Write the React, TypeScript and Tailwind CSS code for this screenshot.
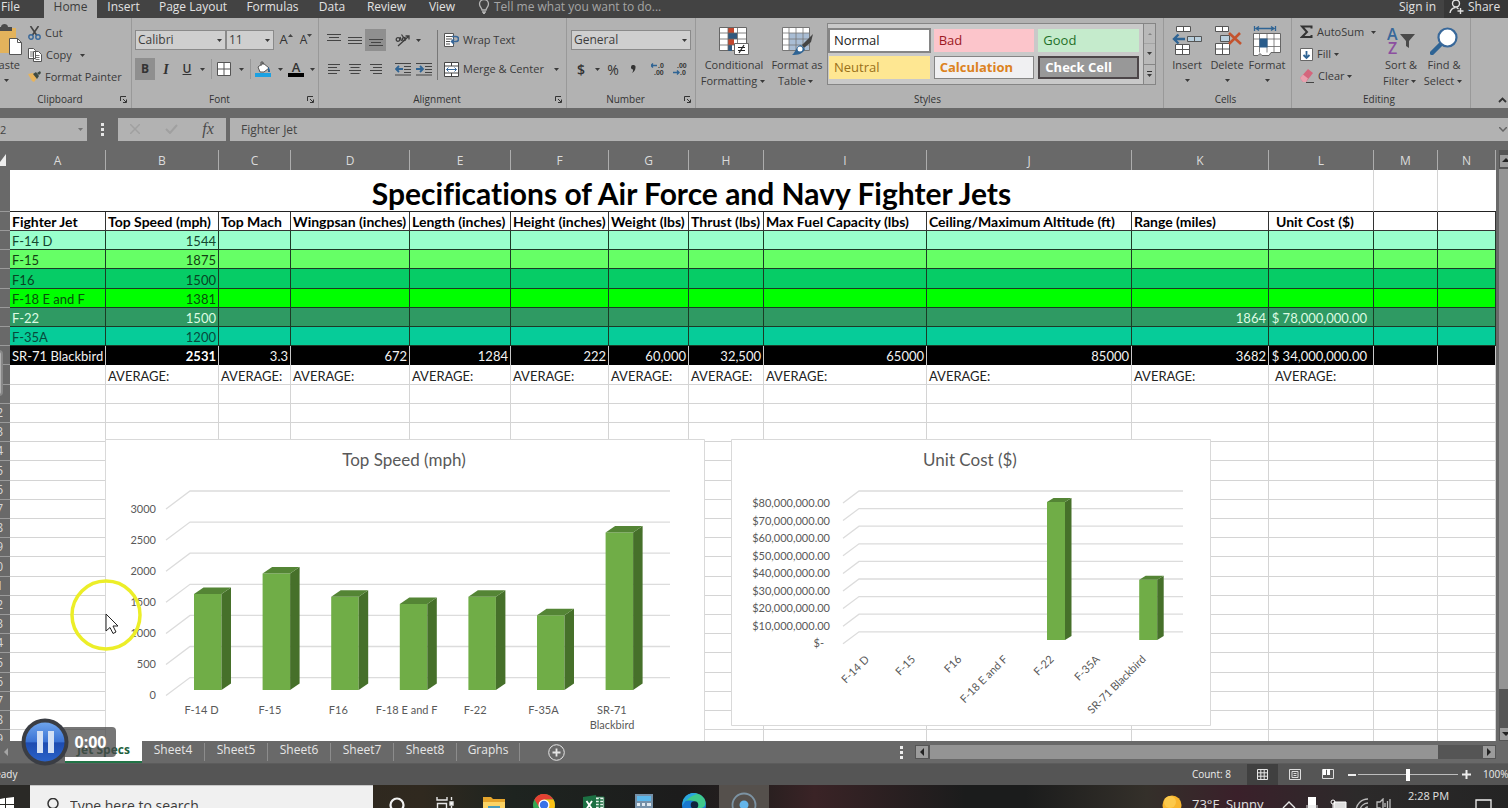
import type { ReactNode } from "react";
import clsx from "clsx";

const uiFont = "font-['Open_Sans','Noto_Sans',sans-serif]";
const cellFont = "font-['Lato','Open_Sans',sans-serif]";

const menuTabs = [
  { label: "File", width: "w-[44px] pl-px" },
  { label: "Home", width: "w-[53px] justify-center", active: true },
  { label: "Insert", width: "w-[53px] justify-center" },
  { label: "Page Layout", width: "w-[86px] justify-center" },
  { label: "Formulas", width: "w-[73px] justify-center" },
  { label: "Data", width: "w-[46px] justify-center" },
  { label: "Review", width: "w-[63px] justify-center" },
  { label: "View", width: "w-[48px] justify-center" },
];

const columns = [
  { id: "A", width: "w-[96px]" },
  { id: "B", width: "w-[113px]" },
  { id: "C", width: "w-[72px]" },
  { id: "D", width: "w-[119px]" },
  { id: "E", width: "w-[101px]" },
  { id: "F", width: "w-[98px]" },
  { id: "G", width: "w-[80px]" },
  { id: "H", width: "w-[75px]" },
  { id: "I", width: "w-[163px]" },
  { id: "J", width: "w-[205px]" },
  { id: "K", width: "w-[137px]" },
  { id: "L", width: "w-[105px]" },
  { id: "M", width: "w-[64px]" },
  { id: "N", width: "" },
];

const headings = [
  "Fighter Jet",
  "Top Speed (mph)",
  "Top Mach",
  "Wingpsan (inches)",
  "Length (inches)",
  "Height (inches)",
  "Weight (lbs)",
  "Thrust (lbs)",
  "Max Fuel Capacity (lbs)",
  "Ceiling/Maximum Altitude (ft)",
  "Range (miles)",
  "Unit Cost ($)",
  "",
  "",
];

const jets = [
  { name: "F-14 D", speed: 1544, style: "bg-[#99ffcc] text-[#14462f]" },
  { name: "F-15", speed: 1875, style: "bg-[#66ff66] text-[#123f12]" },
  { name: "F16", speed: 1500, style: "bg-[#06cc66] text-[#064523]" },
  { name: "F-18 E and F", speed: 1381, style: "bg-[#00ff00] text-[#07500b]" },
  { name: "F-22", speed: 1500, style: "bg-[#2f9a63] text-[#defbe2]", range: "1864", cost: "$ 78,000,000.00" },
  { name: "F-35A", speed: 1200, style: "bg-[#06cc99] text-[#064a3c]" },
];

const blackbird = ["SR-71 Blackbird", "2531", "3.3", "672", "1284", "222", "60,000", "32,500", "65000", "85000", "3682", "$ 34,000,000.00", "", ""];

const blankRows = Array.from({ length: 20 }, (_, i) => i + 11);

const speeds = [
  { label: "F-14 D", value: 1544 },
  { label: "F-15", value: 1875 },
  { label: "F16", value: 1500 },
  { label: "F-18 E and F", value: 1381 },
  { label: "F-22", value: 1500 },
  { label: "F-35A", value: 1200 },
  { label: "SR-71", value: 2531 },
];

const costs = [
  { label: "F-14 D", value: 0 },
  { label: "F-15", value: 0 },
  { label: "F16", value: 0 },
  { label: "F-18 E and F", value: 0 },
  { label: "F-22", value: 78 },
  { label: "F-35A", value: 0 },
  { label: "SR-71 Blackbird", value: 34 },
];

const sheets = ["Sheet4", "Sheet5", "Sheet6", "Sheet7", "Sheet8", "Graphs"];

/* ---------- small pieces ---------- */

function Caret({ className = "w-[10px]" }: { className?: string }) {
  return (
    <span className={clsx("inline-flex shrink-0 justify-center", className)}>
      <svg width="5" height="3" viewBox="0 0 5 3"><path d="M0 0h5L2.5 3z" fill="#3a3a3a" /></svg>
    </span>
  );
}

function Divider() {
  return <span className="h-5 w-px shrink-0 bg-[#989898]" />;
}

function Group({ label, width, launcher, children }: { label: string; width: string; launcher?: boolean; children: ReactNode }) {
  return (
    <section className={clsx("flex shrink-0 flex-col border-r border-[#999]", width)}>
      <div className="min-h-0 flex-1">{children}</div>
      <div className="flex h-[17px] items-center justify-center pr-1 text-[10px] text-[#333]">
        <span className="flex-1 text-center">{label}</span>
        {launcher && (
          <button aria-label={label + " settings"}>
            <svg width="7" height="7" viewBox="0 0 7 7" fill="none" stroke="#333">
              <path d="M.5 5V.5H6M3 3l3 3M6.5 3.500v3H3" />
            </svg>
          </button>
        )}
      </div>
    </section>
  );
}

function IconButton({ label, width = "w-[22px]", active, children }: { label: string; width?: string; active?: boolean; children: ReactNode }) {
  return (
    <button aria-label={label} className={clsx("flex h-[22px] shrink-0 items-center justify-center", width, active && "bg-[#8f8f8f]")}>
      {children}
    </button>
  );
}

function Combo({ label, value, width }: { label: string; value: string; width: string }) {
  return (
    <label className={clsx("relative flex h-5 shrink-0 items-center", width)}>
      <select aria-label={label} className="h-full w-full appearance-none border border-[#8a8a8a] bg-[#cfcfcf] pl-[2px] text-[12px] leading-none text-[#3d3d3d]">
        <option>{value}</option>
      </select>
      <Caret className="absolute right-1" />
    </label>
  );
}

function BigButton({ lines, width, caretBelow, icon }: { lines: string[]; width: string; caretBelow?: boolean; icon: ReactNode }) {
  return (
    <button className={clsx("flex shrink-0 flex-col items-center pt-[6px] text-[11px] leading-4 whitespace-nowrap text-[#3a3a3a]", width)}>
      <span className="flex h-[33px] items-center">{icon}</span>
      <span>{lines[0]}</span>
      {caretBelow ? (
        <Caret className="mt-[6px]" />
      ) : (
        <span className="flex items-center">{lines[1]}<Caret /></span>
      )}
    </button>
  );
}

function Lines({ rows, y = 1 }: { rows: number[]; y?: number }) {
  return (
    <svg width="14" height="14" viewBox="0 0 14 14" stroke="#444" strokeWidth="1">
      {rows.map((w, i) => (
        <path key={i} d={`M${(14 - w) / 2} ${y + i * 3 + 0.5}h${w}`} />
      ))}
    </svg>
  );
}

function TextLines({ align }: { align: "left" | "center" | "right" }) {
  return (
    <svg width="14" height="12" viewBox="0 0 14 12" stroke="#444">
      {[12, 9, 12, 9].map((w, i) => {
        const x = align === "left" ? 1 : align === "right" ? 13 - w : (14 - w) / 2;
        return <path key={i} d={`M${x} ${i * 3 + 1.5}h${w}`} />;
      })}
    </svg>
  );
}

function Indent({ flip }: { flip?: boolean }) {
  return (
    <svg width="16" height="14" viewBox="0 0 16 14" fill="none">
      <path d="M0 1.500h16M9 4.500h7M9 7.500h7M9 10.500h7M0 13h16" stroke="#444" />
      <path d={flip ? "M0 7h7M4 4l3 3-3 3" : "M1 7h7M4 4L1 7l3 3"} stroke="#2f6494" strokeWidth="1.8" />
    </svg>
  );
}

function Decimals({ less }: { less?: boolean }) {
  return (
    <svg width="14" height="14" viewBox="0 0 14 14" fontSize="7" fontWeight="600" fill="#333" fontFamily="Liberation Sans">
      <text x={less ? 4 : 7} y="6">{less ? ".00" : ".0"}</text>
      <text x={less ? 7 : 3} y="13">{less ? ".0" : ".00"}</text>
      <path d={less ? "M0 10.500h6M4 8.500l2 2-2 2" : "M0 3.500h6M2 1.500l-2 2 2 2"} stroke="#2f6494" strokeWidth="1.4" fill="none" />
    </svg>
  );
}

/* ---------- ribbon ---------- */

function MenuBar() {
  return (
    <nav className="flex h-[18px] shrink-0 overflow-hidden bg-[#434343] text-[12px] leading-[13px] text-[#e2e2e2]">
      {menuTabs.map((tab) => (
        <a key={tab.label} href="#" className={clsx("flex shrink-0", tab.width, tab.active && "bg-[#b2b2b2] text-[#3c3c3c]")}>
          {tab.label}
        </a>
      ))}
      <a href="#" className="ml-3 flex gap-1 text-[#a5a5a5]">
        <svg width="12" height="14" viewBox="0 0 12 14" fill="none" stroke="#b5b5b5" strokeWidth="1.300">
          <path d="M4 10C4 8 1.500 7 1.500 4a4.500 4.500 0 0 1 9 0C10.500 7 8 8 8 10zM4 12h4M5 13.500h2" />
        </svg>
        Tell me what you want to do...
      </a>
      <div className="ml-auto flex">
        <a href="#" className="px-2">Sign in</a>
        <a href="#" className="flex w-[64px] gap-1 bg-[#373737] pl-[5px]">
          <svg width="15" height="14" viewBox="0 0 15 14" fill="none" stroke="#e2e2e2" strokeWidth="1.400">
            <circle cx="7" cy="3.500" r="3.500" />
            <path d="M1 13c.5-3.500 2.500-5 5.500-5.500M7.500 7.500l2 1.500M11.500 8v6M8.500 11h6" />
          </svg>
          Share
        </a>
      </div>
    </nav>
  );
}

function ClipboardGroup() {
  const row = "flex h-[22px] items-center gap-1";
  return (
    <Group label="Clipboard" width="w-[132px]" launcher>
      <div className="flex pl-1 text-[11px] text-[#3a3a3a]">
        <button className="-ml-5 flex w-11 shrink-0 flex-col items-center pt-[6px] leading-4">
          <svg width="32" height="33" viewBox="0 0 32 33">
            <path d="M2 4h24v25H2z" fill="#e3b35c" />
            <path d="M7 7V3h4c0-4 7-4 7 0h4v4z" fill="#4b4b4b" />
            <path d="M19.500 14.500h8l4 4v12h-12z" fill="#fff" stroke="#555" />
            <path d="M27.500 14.500v4h4" fill="none" stroke="#555" />
          </svg>
          Paste
          <Caret className="mt-[6px]" />
        </button>
        <div className="flex flex-col pt-1 whitespace-nowrap">
          <button className={row}>
            <svg width="13" height="14" viewBox="0 0 13 14" fill="none">
              <path d="M2.500 0l6 9M10.500 0l-6 9" stroke="#444" strokeWidth="1.600" />
              <circle cx="3" cy="11" r="2.200" stroke="#38689a" strokeWidth="1.400" />
              <circle cx="10" cy="11" r="2.200" stroke="#38689a" strokeWidth="1.400" />
            </svg>
            Cut
          </button>
          <button className={row}>
            <svg width="14" height="14" viewBox="0 0 14 14" fill="#fff" stroke="#555">
              <path d="M.5.5h5l2 2v8h-7zM5.500 3.500h5l3 3v7h-8z" />
              <path d="M2 4h3M2 6h3M2 8h3M7.500 7.500h4M7.500 9.500h4M7.500 11.500h4" strokeWidth=".8" />
            </svg>
            Copy
            <Caret className="ml-[2px] w-[10px]" />
          </button>
          <button className={row}>
            <svg width="13" height="12" viewBox="0 0 13 12">
              <path d="M0 3l5-1 4 5-3 4-2-1z" fill="#e8b45c" />
              <path d="M5 3l3-2 3 4-2 3zM9 2l3-2 1 2-2 2z" fill="#3f4b42" />
            </svg>
            Format Painter
          </button>
        </div>
      </div>
    </Group>
  );
}

function FontGroup() {
  return (
    <Group label="Font" width="w-[187px]" launcher>
      <div className="flex flex-col gap-2 pt-3 pl-[3px] text-[#333]">
        <div className="flex items-center">
          <Combo label="Font name" value="Calibri" width="w-[91px]" />
          <Combo label="Font size" value="11" width="w-12" />
          <div className="ml-[2px] flex h-5">
            <button aria-label="Increase font size" className="flex w-5 items-center justify-center text-[13px]">
              A<svg width="5" height="12" viewBox="0 0 5 12"><path d="M0 3h5L2.500 0z" fill="#444" /></svg>
            </button>
            <button aria-label="Decrease font size" className="flex w-5 items-center justify-center text-[12px]">
              A<svg width="5" height="12" viewBox="0 0 5 12"><path d="M0 0h5L2.500 3z" fill="#444" /></svg>
            </button>
          </div>
        </div>
        <div className="flex items-center">
          <IconButton label="Bold" width="w-5" active><b className="text-[12px]">B</b></IconButton>
          <IconButton label="Italic"><i className="font-['Liberation_Serif',serif] text-[14px] font-bold">I</i></IconButton>
          <IconButton label="Underline" width="w-5"><span className="text-[12px] font-semibold underline">U</span></IconButton>
          <Caret className="mr-1 w-[10px]" />
          <Divider />
          <IconButton label="Borders" width="w-6">
            <svg width="14" height="14" viewBox="0 0 14 14" fill="#fff" stroke="#555"><path d="M.5.5h13v13H.5zM7 .5v13M.5 7h13" /></svg>
          </IconButton>
          <Caret className="mr-1 w-[10px]" />
          <Divider />
          <IconButton label="Fill colour" width="w-6">
            <svg width="16" height="16" viewBox="0 0 16 16">
              <path d="M3 6l5-4 6 5-5 4H5z" fill="#fff" stroke="#555" />
              <path d="M6 5V1h2v3" fill="none" stroke="#555" />
              <path d="M13 6c2 2 2 3 2 5h-2z" fill="#2f6494" />
              <path d="M0 12h16v4H0z" fill="#1ba1e2" />
            </svg>
          </IconButton>
          <Caret />
          <IconButton label="Font colour">
            <span className="flex w-4 flex-col items-center border-b-4 border-black text-[13px] leading-3 font-semibold">A</span>
          </IconButton>
          <Caret />
        </div>
      </div>
    </Group>
  );
}

function AlignmentGroup() {
  return (
    <Group label="Alignment" width="w-[248px]" launcher>
      <div className="flex pt-3 pl-1">
        <div className="flex w-[115px] flex-col gap-2 border-r border-[#777]">
          <div className="flex h-5 items-center">
            <IconButton label="Top align" width="w-[21px]"><Lines rows={[14, 10, 14]} /></IconButton>
            <IconButton label="Middle align" width="w-[21px]"><Lines rows={[14, 14, 14]} y={4} /></IconButton>
            <IconButton label="Bottom align" width="w-[21px]" active><Lines rows={[14, 10, 14]} y={6} /></IconButton>
            <IconButton label="Orientation" width="ml-[6px] w-[22px]">
              <svg width="16" height="14" viewBox="0 0 16 14" fill="none" stroke="#3d3d3d" strokeWidth="1.300">
                <path d="M3 13L14 3M10.500 3H14v3.500" />
                <circle cx="3" cy="6.500" r="1.800" /><path d="M5 4l1.500 4M6.500 1.500l3.500 5" /><circle cx="9" cy="6" r="1.600" />
              </svg>
            </IconButton>
            <Caret className="w-2" />
          </div>
          <div className="flex">
            <IconButton label="Align left" width="w-[21px]"><TextLines align="left" /></IconButton>
            <IconButton label="Center" width="w-[21px]"><TextLines align="center" /></IconButton>
            <IconButton label="Align right" width="w-[21px]"><TextLines align="right" /></IconButton>
            <IconButton label="Decrease indent" width="ml-[6px] w-[21px]"><Indent /></IconButton>
            <IconButton label="Increase indent" width="w-[21px]"><Indent flip /></IconButton>
          </div>
        </div>
        <div className="flex flex-col gap-2 pl-[6px] text-[11px] whitespace-nowrap text-[#3a3a3a]">
          <button className="flex h-5 items-center gap-1">
            <svg width="15" height="14" viewBox="0 0 15 14" fill="none">
              <path d="M.5.5h9v13h-9z" fill="#fff" stroke="#555" />
              <path d="M2 3.500h6M2 6h6M2 8.500h4M2 11h4" stroke="#555" />
              <path d="M8 3.500h4a2.500 2.500 0 0 1 0 5H8M10 6L7.500 8.500 10 11" stroke="#38689a" strokeWidth="1.600" />
            </svg>
            Wrap Text
          </button>
          <button className="flex h-[22px] items-center gap-1">
            <svg width="15" height="15" viewBox="0 0 15 15" fill="#fff" stroke="#444">
              <path d="M.5.5h14v14H.5zM.5 4h14M.5 11h14M7.500.5V4M7.500 11v3.500" />
              <path d="M2.500 7.500h10M4.500 5.500l-2 2 2 2M10.500 5.500l2 2-2 2" stroke="#38689a" fill="none" />
            </svg>
            Merge &amp; Center
            <Caret className="ml-1 w-[10px]" />
          </button>
        </div>
      </div>
    </Group>
  );
}

function NumberGroup() {
  return (
    <Group label="Number" width="w-[129px]" launcher>
      <div className="flex flex-col gap-2 pt-3 pl-1 text-[#333]">
        <Combo label="Number format" value="General" width="w-[120px]" />
        <div className="flex items-center">
          <IconButton label="Accounting format" width="w-5"><span className="text-[14px] font-semibold">$</span></IconButton>
          <Caret className="w-3" />
          <IconButton label="Percent" width="w-5"><span className="text-[14px]">%</span></IconButton>
          <IconButton label="Comma style" width="w-5">
            <svg width="5" height="8" viewBox="0 0 5 8"><path d="M2.500 0a2 2 0 0 1 2 2.500C4.500 5 3 7 1 8c1-1.500 1.300-2.500 1-3.500A2 2 0 0 1 2.500 0z" fill="#333" /></svg>
          </IconButton>
          <span className="ml-1"><Divider /></span>
          <IconButton label="Increase decimal"><Decimals /></IconButton>
          <IconButton label="Decrease decimal"><Decimals less /></IconButton>
        </div>
      </div>
    </Group>
  );
}

function StylesGroup() {
  const cell = "flex h-[23px] items-center pl-[5px] text-left text-[13px]";
  return (
    <Group label="Styles" width="w-[468px]">
      <div className="flex pl-[5px]">
        <BigButton
          lines={["Conditional", "Formatting"]}
          width="w-[66px]"
          icon={
            <svg width="30" height="28" viewBox="0 0 30 28" stroke="#666">
              <path d="M.5.5h27v23H.5z" fill="#fff" />
              <path d="M9 1h6v5H9zM9 12h6v6H9z" fill="#c4472e" stroke="none" />
              <path d="M9 6h9v6H9zM9 18h4v6H9z" fill="#31597f" stroke="none" />
              <path d="M9 .5v23M18.500.5v23M.5 6h27M.5 12h27M.5 18h27" fill="none" strokeWidth=".8" />
              <path d="M15.500 16.500h14v11h-14z" fill="#fff" />
              <path d="M19 20.500h7M19 23.500h7M25 18l-5 8" stroke="#222" fill="none" strokeWidth="1.200" />
            </svg>
          }
        />
        <BigButton
          lines={["Format as", "Table"]}
          width="w-[60px]"
          icon={
            <svg width="31" height="28" viewBox="0 0 31 28" stroke="#777">
              <path d="M.5.5h27v23H.5z" fill="#fff" />
              <path d="M7 6h20v17H7z" fill="#a9bdd4" stroke="none" />
              <path d="M7 .5v23M14 .5v23M21 .5v23M.5 6h27M.5 12h27M.5 18h27" fill="none" strokeWidth=".8" />
              <path d="M31 7l-2 8-7 6-2-3z" fill="#444" stroke="none" />
              <path d="M19 18l4 4c-2 5-7 6-13 6 4-3 4-9 9-10z" fill="#2f6494" stroke="none" />
              <circle cx="18" cy="22" r="2.500" fill="#fff" stroke="none" />
            </svg>
          }
        />
        <div className="mt-[5px] flex h-[62px] flex-1 border border-[#858585] bg-[#c9c9c9]">
          <div className="grid flex-1 grid-cols-3 content-start gap-1 pt-[5px] pr-1 pl-px">
            <button className={clsx(cell, "bg-white text-[#222] outline-2 -outline-offset-1 outline-[#858585]")}>Normal</button>
            <button className={clsx(cell, "bg-[#fcc5cb] text-[#9c1822]")}>Bad</button>
            <button className={clsx(cell, "bg-[#c5ebcc] text-[#1f7028]")}>Good</button>
            <button className={clsx(cell, "bg-[#fee792] text-[#9a7019]")}>Neutral</button>
            <button className={clsx(cell, "border border-[#858585] bg-[#f0f0f2] font-bold text-[#dc8220]")}>Calculation</button>
            <button className={clsx(cell, "border-2 border-[#4c4648] bg-[#989898] font-bold text-white")}>Check Cell</button>
          </div>
          <div className="flex w-3 flex-col border-l border-[#858585] bg-[#b9b9b9]">
            <button aria-label="Scroll styles up" className="flex flex-1 items-center justify-center border-b border-[#858585] opacity-40">
              <svg width="4" height="2" viewBox="0 0 4 2"><path d="M0 2h4L2 0z" fill="#333" /></svg>
            </button>
            <button aria-label="Scroll styles down" className="flex flex-1 items-center justify-center border-b border-[#858585]"><Caret className="w-2" /></button>
            <button aria-label="More styles" className="flex flex-1 flex-col items-center justify-center gap-[2px]">
              <span className="h-px w-[5px] bg-[#333]" />
              <Caret className="w-2" />
            </button>
          </div>
        </div>
        <div className="w-[7px]" />
      </div>
    </Group>
  );
}

function CellsGroup() {
  return (
    <Group label="Cells" width="w-[128px]">
      <div className="flex pl-[3px]">
        <BigButton
          lines={["Insert"]}
          width="w-10"
          caretBelow
          icon={
            <svg width="30" height="30" viewBox="0 0 30 30" fill="#fff" stroke="#555">
              <path d="M4.500.5h14v5h-14zM11.500.5v5M3.500 18.500h14v10h-14zM10.500 18.500v10M3.500 23.500h14" />
              <path d="M15.500 10.500h14v5h-14zM22.500 10.500v5" fill="#b9cfdd" />
              <path d="M13 13H2M6.500 8.500L2 13l4.500 4.500" fill="none" stroke="#2f6494" strokeWidth="2.400" />
            </svg>
          }
        />
        <BigButton
          lines={["Delete"]}
          width="w-10"
          caretBelow
          icon={
            <svg width="30" height="30" viewBox="0 0 30 30" fill="#fff" stroke="#555">
              <path d="M3.500.5h13v5h-13zM10.500.5v5M3.500 17.500h14v11h-14zM10.500 17.500v11M3.500 23h14" />
              <path d="M8.500 9.500h9v6h-9z" fill="#b9cfdd" />
              <path d="M17 7l12 11M28 7L17 18" fill="none" stroke="#c4532e" strokeWidth="2.600" />
            </svg>
          }
        />
        <BigButton
          lines={["Format"]}
          width="w-10"
          caretBelow
          icon={
            <svg width="28" height="30" viewBox="0 0 28 30" fill="#fff" stroke="#666">
              <path d="M1.500 0v5M22.500 0v5M3 2.500h18M6 .5l-3 2 3 2M18 .5l3 2-3 2" fill="none" stroke="#2f6494" strokeWidth="1.300" />
              <path d="M.5 7.500h27v19H18l-2 3H9l-2-2-2 2H.5z" />
              <path d="M6.500 7.500v19M14 7.500v19M21 7.500v19M.5 13h27M.5 20.500h27" strokeWidth=".8" fill="none" />
              <path d="M6.500 12.500h8v9h-8z" fill="#2b5d8c" stroke="none" />
            </svg>
          }
        />
      </div>
    </Group>
  );
}

function EditingGroup() {
  const row = "flex h-[22px] items-center gap-1";
  return (
    <Group label="Editing" width="w-[179px]">
      <div className="flex pl-2">
        <div className="flex w-20 shrink-0 flex-col pt-[3px] text-[11px] text-[#3a3a3a]">
          <button className={row}>
            <svg width="13" height="14" viewBox="0 0 13 14" fill="none" stroke="#333" strokeWidth="2" className="shrink-0"><path d="M11.500 3.500V1.500H2L7 7l-5 5h9.500v-2" /></svg>
            AutoSum
            <Caret className="w-[10px]" />
          </button>
          <button className={row}>
            <svg width="13" height="13" viewBox="0 0 13 13" fill="#fff"><path d="M.5.5h12v12H.5z" stroke="#666" /><path d="M6.500 3v7M3.500 7l3 3 3-3" fill="none" stroke="#2f6494" strokeWidth="1.800" /></svg>
            <span className="flex items-center">Fill<Caret /></span>
          </button>
          <button className={row}>
            <svg width="14" height="14" viewBox="0 0 14 14"><path d="M8 0l5 4-7 9H3L0 9z" fill="#d4657c" /><path d="M0 9l3-3.500 5 4L6 13H3z" fill="#e8a0ae" /><path d="M6 13.500h8" stroke="#444" /></svg>
            <span className="flex items-center">Clear<Caret /></span>
          </button>
        </div>
        <BigButton
          lines={["Sort &", "Filter"]}
          width="w-[42px]"
          icon={
            <svg width="28" height="30" viewBox="0 0 28 30" fontFamily="Open Sans" fontWeight="600" fontSize="16">
              <text x="0" y="14" fill="#38689a">A</text>
              <text x="1" y="28" fill="#8c4fa0">Z</text>
              <path d="M13 8h15l-6 7v7l-3-2v-5z" fill="#4a4a4a" />
            </svg>
          }
        />
        <BigButton
          lines={["Find &", "Select"]}
          width="w-11"
          icon={
            <svg width="28" height="28" viewBox="0 0 28 28" fill="none">
              <path d="M11 17L2 26" stroke="#2f6494" strokeWidth="4.500" strokeLinecap="round" />
              <circle cx="17.500" cy="10.500" r="9" fill="#fff" stroke="#38689a" strokeWidth="2.200" />
            </svg>
          }
        />
      </div>
    </Group>
  );
}

function Ribbon() {
  return (
    <div className="flex h-[90px] shrink-0 overflow-hidden bg-[#b2b2b2]">
      <ClipboardGroup />
      <FontGroup />
      <AlignmentGroup />
      <NumberGroup />
      <StylesGroup />
      <CellsGroup />
      <EditingGroup />
      <button aria-label="Collapse ribbon" className="mt-auto ml-auto h-[17px] pr-px">
        <svg width="9" height="6" viewBox="0 0 9 6" fill="none" stroke="#333" strokeWidth="1.800"><path d="M1 5l3.500-3.500L8 5" /></svg>
      </button>
    </div>
  );
}

function FormulaBar() {
  return (
    <div className="flex h-[42px] shrink-0 items-center bg-[#696969]">
      <label className="relative flex h-[23px] w-[87px] items-center">
        <input aria-label="Name box" defaultValue="2" className="h-full w-full bg-[#b2b2b2] text-[11px] text-[#444]" />
        <Caret className="absolute right-1 opacity-50" />
      </label>
      <span className="mx-[14px] flex w-[3px] flex-col gap-[2px]">
        <i className="size-[3px] bg-[#e6e6e6]" /><i className="size-[3px] bg-[#e6e6e6]" /><i className="size-[3px] bg-[#e6e6e6]" />
      </span>
      <div className="flex h-[23px] w-[108px] items-center justify-around bg-[#b2b2b2]">
        <button aria-label="Cancel">
          <svg width="10" height="10" viewBox="0 0 10 10" stroke="#a0a0a0" strokeWidth="1.500"><path d="M0 0l10 10M10 0L0 10" /></svg>
        </button>
        <button aria-label="Enter">
          <svg width="13" height="10" viewBox="0 0 13 10" fill="none" stroke="#a0a0a0" strokeWidth="2"><path d="M1 5l4 4 7-8" /></svg>
        </button>
        <button className="font-['Liberation_Serif',serif] text-[16px] leading-none text-[#4a4a4a] italic">fx</button>
      </div>
      <label className="relative ml-1 flex h-[23px] flex-1 items-center">
        <input aria-label="Formula" defaultValue="Fighter Jet" className="h-full w-full bg-[#b2b2b2] pl-[11px] text-[12px] text-[#444]" />
        <svg width="8" height="5" viewBox="0 0 8 5" fill="none" stroke="#666" strokeWidth="1.500" className="absolute right-px"><path d="M0 0l4 4 4-4" /></svg>
      </label>
    </div>
  );
}

/* ---------- worksheet ---------- */

function RowHead({ n }: { n: number }) {
  return (
    <th scope="row" className={clsx("border-b border-[#9a9a9a] bg-[#696969] p-0 text-[12px] leading-none font-normal text-[#d8d8d8]", uiFont)}>
      <div className="flex w-[3px] justify-end">{n > 11 ? n : ""}</div>
    </th>
  );
}

function Worksheet() {
  const boxed = "border-r border-b border-[#1c3a26]";
  return (
    <table className={clsx("w-full table-fixed border-separate border-spacing-0 text-[13px] leading-[14px] whitespace-nowrap text-[#222]", cellFont)}>
      <colgroup>
        <col className="w-[10px]" />
        {columns.map((c) => <col key={c.id} className={c.width} />)}
      </colgroup>
      <thead className={uiFont}>
        <tr className="h-5 bg-[#696969] text-[12px] text-[#dcdcdc]">
          <th aria-label="Select all" className="p-0 align-middle">
            <svg width="6" height="12" viewBox="0 0 6 12"><path d="M6 0v12H0V8z" fill="#eee" /></svg>
          </th>
          {columns.map((c) => (
            <th key={c.id} scope="col" className="border-r border-[#adadad] p-0 pt-[2px] font-normal">{c.id}</th>
          ))}
        </tr>
      </thead>
      <tbody>
        <tr className="h-[42px]">
          <RowHead n={1} />
          <td colSpan={12} className="border-r border-b border-r-[#d4d4d4] border-b-[#222] p-0 pt-1 text-center text-[30px] font-bold text-black [font-variant-ligatures:none]">
            Specifications of Air Force and Navy Fighter Jets
          </td>
          <td className="border-r border-b border-r-[#d4d4d4] border-b-[#222]" />
          <td className="border-b border-[#222]" />
        </tr>
        <tr className="h-[19px] text-[14px] font-bold text-black">
          <RowHead n={2} />
          {headings.map((h, i) => (
            <td key={i} className={clsx("border-r border-b border-[#333] p-0 pt-px", i === 11 ? "pl-[7px]" : "pl-[2px]")}>{h}</td>
          ))}
        </tr>
        {jets.map((jet, r) => (
          <tr key={jet.name} className={clsx(jet.style, r === 2 ? "h-5" : "h-[19px]")}>
            <RowHead n={r + 3} />
            {columns.map((c) => (
              <td key={c.id} className={clsx(boxed, "p-0 px-[2px] pt-[2px]", c.id !== "A" && "text-right", c.id === "L" && "pr-[6px]")}>
                {c.id === "A" && jet.name}
                {c.id === "B" && jet.speed}
                {c.id === "K" && jet.range}
                {c.id === "L" && jet.cost}
              </td>
            ))}
          </tr>
        ))}
        <tr className="h-[19px] bg-black text-[#f2f2f2]">
          <RowHead n={9} />
          {blackbird.map((v, i) => (
            <td key={i} className={clsx("border-r border-[#c8c8c8] p-0 px-[2px] pt-px", i > 0 && "text-right", i === 1 && "font-bold text-white", i === 11 && "pr-[6px]")}>{v}</td>
          ))}
        </tr>
        <tr className="h-5">
          <RowHead n={10} />
          {columns.map((c, i) => (
            <td key={c.id} className={clsx("border-r border-b border-[#d4d4d4] p-0 pt-[2px]", c.id === "L" ? "pl-[6px]" : "pl-[2px]")}>
              {i > 0 && i < 12 && "AVERAGE:"}
            </td>
          ))}
        </tr>
        {blankRows.map((n) => (
          <tr key={n} className={n % 5 === 0 ? "h-5" : "h-[19px]"}>
            <RowHead n={n} />
            {columns.map((c) => <td key={c.id} className="border-r border-b border-[#d4d4d4] p-0" />)}
          </tr>
        ))}
      </tbody>
    </table>
  );
}

function Bar({ x, base, height, width, dx, dy }: { x: number; base: number; height: number; width: number; dx: number; dy: number }) {
  const top = base - height;
  return (
    <g>
      <path d={`M${x} ${top}h${width}V${base}h${-width}z`} fill="#70ad47" />
      <path d={`M${x + width} ${top}l${dx} ${-dy}V${base - dy}l${-dx} ${dy}z`} fill="#46702a" />
      <path d={`M${x} ${top}l${dx} ${-dy}h${width}l${-dx} ${dy}z`} fill="#548535" />
    </g>
  );
}

function SpeedChart() {
  return (
    <svg width="600" height="302" viewBox="0 0 600 302" fontFamily="Lato, sans-serif" fontSize="11" fill="#595959" role="img" aria-label="Top Speed (mph)">
      <path d="M.5 302V.5h599V302" fill="#fff" stroke="#d9d9d9" />
      <text x="299" y="27" textAnchor="middle" fontSize="17">Top Speed (mph)</text>
      {[3000, 2500, 2000, 1500, 1000, 500, 0].map((v, i) => (
        <g key={v}>
          <path d={`M61 ${70 + i * 31.1}l24 -18H565`} fill="none" stroke="#dcdcdc" strokeWidth="1.300" />
          <text x="51" y={74 + i * 31} textAnchor="end">{v}</text>
        </g>
      ))}
      {speeds.map((s, i) => (
        <g key={s.label}>
          <Bar x={89 + i * 68.6} base={251} height={s.value * 0.0622} width={27.500} dx={9.500} dy={6.500} />
          <text x={96.500 + i * 68.4} y="275" textAnchor="middle">{s.label}</text>
        </g>
      ))}
      <text x="507" y="290" textAnchor="middle">Blackbird</text>
    </svg>
  );
}

function CostChart() {
  return (
    <svg width="480" height="287" viewBox="0 0 480 287" fontFamily="Lato, sans-serif" fontSize="11" fill="#595959" role="img" aria-label="Unit Cost ($)">
      <path d="M.5.5h479v286H.5z" fill="#fff" stroke="#d9d9d9" />
      <text x="239" y="27" textAnchor="middle" fontSize="17">Unit Cost ($)</text>
      {[80, 70, 60, 50, 40, 30, 20, 10, 0].map((v, i) => (
        <g key={v}>
          <path d={`M112 ${64 + i * 17.6}l16 -12H452`} fill="none" stroke="#dcdcdc" strokeWidth="1.300" />
          <text x={v ? 99 : 93} y={68 + i * 17.5} textAnchor="end">{v ? `$${v},000,000.00` : "$-"}</text>
        </g>
      ))}
      {costs.map((c, i) => (
        <g key={c.label}>
          {c.value > 0 && <Bar x={316 + (i - 4) * 46.100} base={201} height={c.value * 1.770} width={18} dx={6.500} dy={4} />}
          <text transform={`translate(${139 + i * 46.1} 221) rotate(-45)`} textAnchor="end">{c.label}</text>
        </g>
      ))}
    </svg>
  );
}

function ScrollButton({ dir }: { dir: "up" | "down" | "left" | "right" }) {
  const turn = { up: "M0 5h8L4 1z", down: "M0 2h8L4 6z", left: "M6 0v8L2 4z", right: "M2 0v8l4-4z" };
  return (
    <button aria-label={"Scroll " + dir} className="flex size-[14px] shrink-0 items-center justify-center border border-[#555] bg-[#9c9c9c]">
      <svg width="8" height="8" viewBox="0 0 8 8" className="shrink-0"><path d={turn[dir]} fill="#222" /></svg>
    </button>
  );
}

function SheetArea() {
  return (
    <div className="flex min-h-0 flex-1 overflow-hidden bg-[#696969]">
      <div className="relative min-w-0 flex-1 overflow-hidden bg-white">
        <Worksheet />
        <div className="absolute top-[289px] left-[105px]"><SpeedChart /></div>
        <div className="absolute top-[289px] left-[731px]"><CostChart /></div>
        <div className="absolute top-[200px] -left-2 h-[46px] w-[11px] rounded-[4px] border-2 border-[#888] bg-[#b4b4b4]" />
        {/* click highlight and pointer */}
        <svg width="74" height="74" viewBox="0 0 74 74" className="absolute top-[428px] left-[69px]">
          <circle cx="37" cy="37" r="34" fill="none" stroke="#ecee28" strokeWidth="3.500" />
          <path d="M37 36v17l4-3.500 3 6 3-1.500-3-6h5z" fill="#fff" stroke="#222" />
        </svg>
      </div>
      <div className="flex w-3 shrink-0 flex-col overflow-hidden border-l-3 border-[#696969] bg-[#555] pt-1">
        <ScrollButton dir="up" />
        <div className="mt-px flex-1 bg-[#949494]" />
        <div className="h-[38px]" />
        <ScrollButton dir="down" />
      </div>
    </div>
  );
}

/* ---------- bottom bars ---------- */

function SheetTabs() {
  return (
    <div className="flex h-[23px] shrink-0 items-center border-b border-[#5c5c5c] bg-[#696969] text-[12px] text-[#e6e6e6]">
      <button aria-label="Previous sheet" className="flex w-[65px] pl-1">
        <svg width="5" height="8" viewBox="0 0 5 8"><path d="M4 0v8L0 4z" fill="#a5a5a5" /></svg>
      </button>
      <a href="#" className="flex h-[22px] w-[77px] shrink-0 justify-center border-b-2 border-[#217346] bg-white leading-[17px] font-bold text-[#1d5f3c]">Jet Specs</a>
      {sheets.map((s) => (
        <a key={s} href="#" className="flex h-[18px] w-[63px] shrink-0 items-center justify-center border-r border-[#8c8c8c] pb-1">{s}</a>
      ))}
      <button aria-label="New sheet" className="ml-7">
        <svg width="17" height="17" viewBox="0 0 17 17" fill="none" stroke="#e6e6e6"><circle cx="8.500" cy="8.500" r="7.800" /><path d="M8.500 4.500v8M4.500 8.500h8" strokeWidth="1.800" /></svg>
      </button>
      <div className="ml-auto flex w-[608px] items-center pr-3">
        <span className="mr-3 flex flex-col gap-[2px]">
          <i className="size-[3px] bg-[#eee]" /><i className="size-[3px] bg-[#eee]" /><i className="size-[3px] bg-[#eee]" />
        </span>
        <ScrollButton dir="left" />
        <div className="flex h-[14px] flex-1 bg-[#555] pl-px">
          <div className="mr-11 flex-1 bg-[#949494]" />
        </div>
        <ScrollButton dir="right" />
      </div>
    </div>
  );
}

function StatusBar() {
  return (
    <div className="flex h-[21px] shrink-0 items-center overflow-hidden bg-[#555] text-[10px] text-[#ececec]">
      <span className="-ml-[11px]">Ready</span>
      <span className="mr-4 ml-auto">Count: 8</span>
      <button aria-label="Normal view" className="flex h-full w-[31px] items-center justify-center bg-[#404040]">
        <svg width="11" height="11" viewBox="0 0 11 11" fill="none" stroke="#e6e6e6"><path d="M.5.5h10v10H.5zM3.800.5v10M7.200.5v10M.5 3.800h10M.5 7.200h10" /></svg>
      </button>
      <button aria-label="Page layout view" className="flex w-[33px] justify-center">
        <svg width="12" height="11" viewBox="0 0 12 11" fill="none" stroke="#ddd"><path d="M.5.5h11v10H.5zM3 2.500h6v6H3zM4.500 4.500h3M4.500 6.500h3" /></svg>
      </button>
      <button aria-label="Page break preview" className="flex w-[33px] justify-center">
        <svg width="12" height="11" viewBox="0 0 12 11"><path d="M.5.5h11v9H.5z" fill="none" stroke="#ddd" /><path d="M1 0h3v6H1zM5 0h3v6H5z" fill="#fff" /></svg>
      </button>
      <button aria-label="Zoom out" className="ml-1 h-[2px] w-2 bg-[#eee]" />
      <input
        type="range"
        aria-label="Zoom"
        defaultValue="50"
        className="mx-[2px] h-3 w-[100px] appearance-none bg-[linear-gradient(#bdbdbd,#bdbdbd)] bg-[length:100%_1px] bg-center bg-no-repeat [&::-webkit-slider-thumb]:h-3 [&::-webkit-slider-thumb]:w-1 [&::-webkit-slider-thumb]:appearance-none [&::-webkit-slider-thumb]:bg-white"
      />
      <button aria-label="Zoom in" className="ml-[2px]">
        <svg width="9" height="9" viewBox="0 0 9 9" stroke="#eee" strokeWidth="2"><path d="M4.500 0v9M0 4.500h9" /></svg>
      </button>
      <span className="ml-3 w-[25px] whitespace-nowrap">100%</span>
    </div>
  );
}

function Taskbar() {
  const app = "flex w-[50px] shrink-0 justify-center";
  return (
    <div className="h-[23px] shrink-0 overflow-hidden bg-[linear-gradient(90deg,#282622_0%,#30291f_28%,#1e2420_34%,#1c1c1c_45%,#2a2020_51%,#3a2326_54%,#1b1c1c_64%,#1b1c1c_68%,#34302a_76%,#3a202a_82%,#2c2a2a_90%,#242424_100%)]">
      <div className="flex h-10 items-center">
        <button aria-label="Start" className="flex h-full w-[30px] shrink-0 bg-[#2a2926] pt-3">
          <svg width="14" height="16" viewBox="0 0 14 16" fill="#fff"><path d="M0 2l5-1v6H0zM6 1l8-1v7H6zM0 8h5v6l-5-1zM6 8h8v8l-8-1z" /></svg>
        </button>
        <label className="flex h-full w-[343px] shrink-0 items-center gap-[9px] border-t border-[#c8c8c8] bg-[#f0f0f0] pl-4">
          <svg width="15" height="16" viewBox="0 0 15 16" fill="none" stroke="#333" strokeWidth="1.500"><circle cx="7" cy="5.500" r="5" /><path d="M4 9.500L0 15" /></svg>
          <input aria-label="Search" placeholder="Type here to search" className="min-w-0 flex-1 bg-transparent text-[14px] placeholder:text-[#3c3c3c]" />
        </label>
        <button aria-label="Cortana" className="flex w-12 shrink-0 justify-center">
          <svg width="16" height="16" viewBox="0 0 16 16" fill="none" stroke="#f2f2f2" strokeWidth="2.200"><circle cx="8" cy="8" r="6.500" /></svg>
        </button>
        <button aria-label="Task view" className="flex w-12 shrink-0 justify-center">
          <svg width="18" height="16" viewBox="0 0 18 16" fill="none" stroke="#e6e6e6" strokeWidth="1.400"><path d="M1 0v3h10V0M1.500 6.500h9v8h-9zM15.500 0v3M15.500 9v7" /><path d="M14 5h3v3h-3z" fill="#fff" /></svg>
        </button>
        <button aria-label="File Explorer" className={app}>
          <svg width="22" height="20" viewBox="0 0 22 20"><path d="M0 2h8l2 2h12v15H0z" fill="#e5a52c" /><path d="M0 7h22v12H0z" fill="#fbd364" /><path d="M5 11h12v8H5z" fill="#4a9bb8" /></svg>
        </button>
        <button aria-label="Chrome" className={app}>
          <svg width="22" height="22" viewBox="0 0 22 22"><circle cx="11" cy="11" r="11" fill="#34a853" /><path d="M1.500 5.500A11 11 0 0 1 20.500 5.500H11z" fill="#e34133" /><path d="M1.500 5.500A11 11 0 0 1 11 0l2 6-7 7z" fill="#e34133" /><path d="M20.500 5.500A11 11 0 0 1 11 22l5-11-5-5.500z" fill="#fbc116" /><circle cx="11" cy="11" r="5.500" fill="#fff" /><circle cx="11" cy="11" r="4.200" fill="#3a72e8" /></svg>
        </button>
        <button aria-label="Excel" className={app}>
          <svg width="22" height="20" viewBox="0 0 22 20"><path d="M12 2h9v16h-9z" fill="#e8f3ec" stroke="#217346" /><path d="M13 5h7M13 8h7M13 11h7M16.500 3v14" stroke="#217346" strokeWidth="1.500" /><path d="M0 2l13-2v20L0 18z" fill="#1c7043" /><path d="M3.500 6l5.500 8M9 6l-5.500 8" stroke="#fff" strokeWidth="1.800" /></svg>
        </button>
        <button aria-label="Calculator" className={app}>
          <svg width="18" height="22" viewBox="0 0 18 22"><path d="M0 0h18v22H0z" fill="#7590a8" /><path d="M2 2h14v5H2z" fill="#5cb8ec" /><path d="M2 9h3v3H2zM7 9h3v3H7zM12 9h4v3h-4zM2 14h3v3H2zM7 14h3v3H7z" fill="#dfe8ef" /><path d="M12 14h4v6h-4z" fill="#3b8ad0" /></svg>
        </button>
        <button aria-label="Edge" className={app}>
          <svg width="24" height="24" viewBox="0 0 24 24"><circle cx="12" cy="12" r="12" fill="#1a78cf" /><path d="M1 8C4-1 18-3 23 7c2 6-2 9-8 8 2-6-4-9-14-7z" fill="#3fc98c" /><path d="M1 8C4 0 12-1 15 1 8 3 3 8 0 13z" fill="#2ba6e0" /><circle cx="12.500" cy="12" r="3.800" fill="#10243e" /></svg>
        </button>
        <button aria-label="Recorder" className="flex h-full w-[50px] shrink-0 items-center justify-center bg-[#55504c]">
          <svg width="26" height="26" viewBox="0 0 26 26"><circle cx="13" cy="13" r="11.500" fill="none" stroke="#7c93a3" strokeWidth="1.800" /><circle cx="13" cy="13" r="4.500" fill="#63b5ea" /></svg>
        </button>
        <div className="ml-auto flex items-center text-[#e0e0e0]">
          <svg width="20" height="20" viewBox="0 0 20 20"><circle cx="10" cy="10" r="9.500" fill="#f8b52d" /><circle cx="8" cy="7" r="6" fill="#fcc94c" /></svg>
          <span className="ml-[10px] w-[90px] text-[13px] whitespace-nowrap">73°F&nbsp; Sunny</span>
          <svg width="14" height="10" viewBox="0 0 14 10" fill="none" stroke="#e6e6e6" strokeWidth="1.400"><path d="M1 8l6-6 6 6" /></svg>
          <svg width="12" height="16" viewBox="0 0 12 16" className="ml-[10px]"><path d="M2 0h8v12H2z" fill="#fff" /><path d="M0 8h12v6H0z" fill="#ddd" opacity=".5" /></svg>
          <svg width="17" height="12" viewBox="0 0 17 12" className="ml-3"><path d="M4 3h12v8H4z" fill="#ddd" stroke="#fff" /><circle cx="3" cy="3" r="2" fill="none" stroke="#fff" /><path d="M3 5v6" stroke="#fff" /></svg>
          <svg width="14" height="14" viewBox="0 0 14 14" fill="none" stroke="#bbb" strokeWidth="1.300" className="ml-2"><path d="M1 13A12 12 0 0 1 13 1M5 13a8 8 0 0 1 8-8M9 13a4 4 0 0 1 4-4" /></svg>
          <svg width="16" height="14" viewBox="0 0 16 14" fill="none" stroke="#bbb" strokeWidth="1.300" className="ml-[7px]"><path d="M1 4h3l3-3v12l-3-3H1zM9 5v4M11.500 3v8M14 1v12" /></svg>
          <time className="ml-4 w-[42px] pb-[18px] text-[11px] leading-[14px] whitespace-nowrap">2:28 PM</time>
          <svg width="17" height="17" viewBox="0 0 17 17" fill="none" stroke="#eee" strokeWidth="1.300" className="mr-4 ml-[25px]"><path d="M1 3h15v11H9l-3 3v-3H1z" /></svg>
        </div>
      </div>
    </div>
  );
}

function RecorderControl() {
  return (
    <div className="absolute bottom-[42px] left-[21px] flex items-center">
      <button aria-label="Pause recording" className="z-10">
        <svg width="48" height="48" viewBox="0 0 48 48">
          <defs>
            <linearGradient id="pauseBlue" x1="0" y1="0" x2="0" y2="1">
              <stop offset="0" stopColor="#6ea4ec" />
              <stop offset=".5" stopColor="#3a72d4" />
              <stop offset=".52" stopColor="#1d4bb0" />
              <stop offset="1" stopColor="#2a62c8" />
            </linearGradient>
          </defs>
          <circle cx="24" cy="24" r="23.500" fill="#3a3d44" />
          <circle cx="24" cy="24" r="19.500" fill="url(#pauseBlue)" />
          <path d="M16 13h6v22h-6zM27 13h6v22h-6z" fill="#d3e0f4" />
        </svg>
      </button>
      <span className="-ml-2 flex h-[30px] w-[55px] items-center justify-center rounded-[4px] bg-[#484848]/75 pl-1 text-[16px] font-bold text-white">0:00</span>
    </div>
  );
}

export default function App() {
  return (
    <div className={clsx("relative flex h-screen flex-col overflow-hidden bg-[#696969]", uiFont)}>
      <MenuBar />
      <Ribbon />
      <FormulaBar />
      <SheetArea />
      <SheetTabs />
      <StatusBar />
      <Taskbar />
      <RecorderControl />
    </div>
  );
}
